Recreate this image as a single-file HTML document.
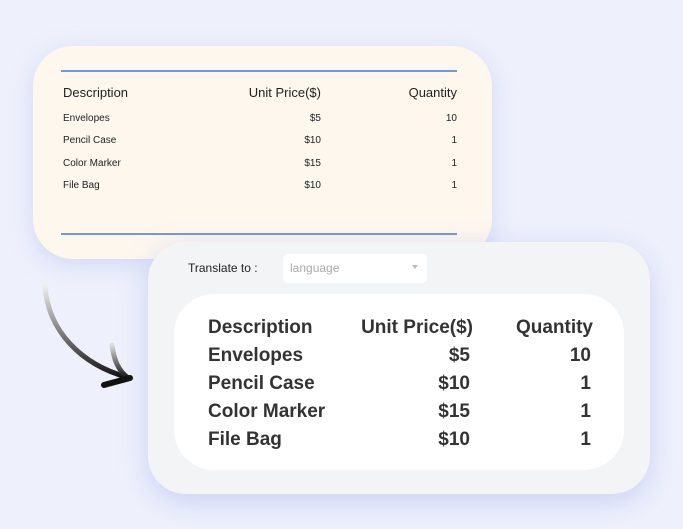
<!DOCTYPE html>
<html><head><style>
body{margin:0;width:683px;height:529px;background:#eef1fb;position:relative;overflow:hidden;font-family:"Liberation Sans",sans-serif;}
.c1{position:absolute;left:33px;top:46px;width:459px;height:213px;background:#fdf7ee;border-radius:40px;box-shadow:0 6px 24px rgba(160,170,240,.35);}
.ln{position:absolute;left:28px;width:396px;height:2px;background:#6f9ad3;}
.t1{position:absolute;font-size:10px;color:#222;}
.c2{position:absolute;left:148px;top:242px;width:502px;height:252px;background:#f3f4f6;border-radius:38px;box-shadow:0 8px 28px rgba(150,160,240,.4);}
.dd{position:absolute;left:135px;top:12px;width:144px;height:29px;background:#fff;border-radius:5px;}
.in{position:absolute;left:26px;top:52px;width:450px;height:176px;background:#fff;border-radius:40px;}
.t2{position:absolute;font-size:19px;font-weight:bold;color:#333;line-height:28px;top:20px;}
.r{text-align:right;}
</style></head><body>
<div class="c1">
<div class="ln" style="top:24px"></div>
<div class="ln" style="top:187px"></div>
<div class="t1" style="left:30px;top:39px;font-size:13px">Description</div>
<div class="t1 r" style="left:160px;width:128px;top:39px;font-size:13px">Unit Price($)</div>
<div class="t1 r" style="left:300px;width:124px;top:39px;font-size:13px">Quantity</div>
<div class="t1" style="left:30px;top:67px">Envelopes</div>
<div class="t1" style="left:30px;top:89px">Pencil Case</div>
<div class="t1" style="left:30px;top:112px">Color Marker</div>
<div class="t1" style="left:30px;top:134px">File Bag</div>
<div class="t1 r" style="left:200px;width:88px;top:67px">$5</div>
<div class="t1 r" style="left:200px;width:88px;top:89px">$10</div>
<div class="t1 r" style="left:200px;width:88px;top:112px">$15</div>
<div class="t1 r" style="left:200px;width:88px;top:134px">$10</div>
<div class="t1 r" style="left:340px;width:84px;top:67px">10</div>
<div class="t1 r" style="left:340px;width:84px;top:89px">1</div>
<div class="t1 r" style="left:340px;width:84px;top:112px">1</div>
<div class="t1 r" style="left:340px;width:84px;top:134px">1</div>
</div>
<svg style="position:absolute;left:0;top:0" width="683" height="529">
<defs><linearGradient id="g" x1="0" y1="0" x2="0" y2="1"><stop offset="0" stop-color="#eee"/><stop offset="1" stop-color="#111"/></linearGradient>
<linearGradient id="g2" x1="0" y1="0" x2="0" y2="1"><stop offset="0" stop-color="#ddd"/><stop offset="1" stop-color="#111"/></linearGradient></defs>
<path d="M45 286 C48 330 80 365 130 378" stroke="url(#g)" stroke-width="5" fill="none" stroke-linecap="round"/>
<path d="M112 345 C114 360 118 370 128 378" stroke="url(#g2)" stroke-width="5" fill="none" stroke-linecap="round"/>
<path d="M104 385 L130 378" stroke="#111" stroke-width="6" fill="none" stroke-linecap="round"/>
</svg>
<div class="c2">
<div style="position:absolute;left:40px;top:19px;font-size:12px;color:#222">Translate to :</div>
<div class="dd"><span style="position:absolute;left:7px;top:7px;font-size:12px;color:#aaa">language</span><span style="position:absolute;right:9px;top:11px;border:3px solid transparent;border-top:4px solid #bbb"></span></div>
<div class="in">
<div class="t2" style="left:34px">Description<br>Envelopes<br>Pencil Case<br>Color Marker<br>File Bag</div>
<div class="t2 r" style="left:160px;width:139px">Unit Price($)</div>
<div class="t2 r" style="left:160px;width:136px;top:48px">$5<br>$10<br>$15<br>$10</div>
<div class="t2 r" style="left:320px;width:99px">Quantity</div>
<div class="t2 r" style="left:320px;width:97px;top:48px">10<br>1<br>1<br>1</div>
</div>
</div>
</body></html>
